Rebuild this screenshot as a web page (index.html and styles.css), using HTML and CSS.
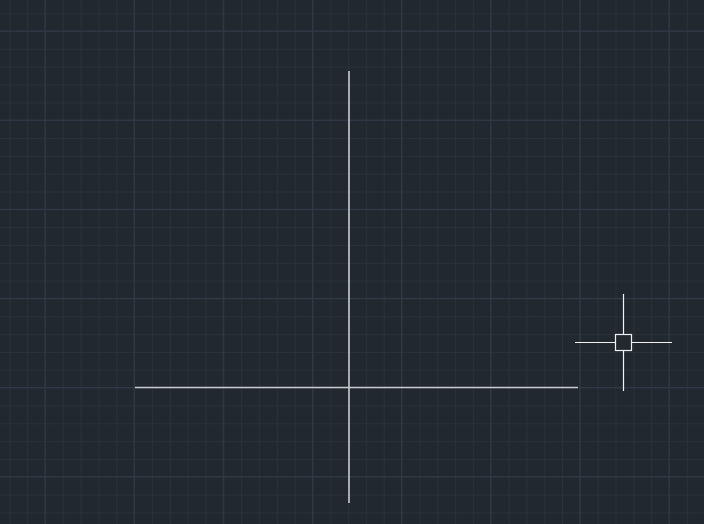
FILE: index.html
```html
<!DOCTYPE html>
<html>
<head>
<meta charset="utf-8">
<link rel="stylesheet" href="styles.css">
</head>
<body>
<div class="canvas">
<svg class="drawing" width="704" height="524" viewBox="0 0 704 524">
  <defs>
    <pattern id="minor" x="9.3" y="13.2" width="17.83" height="17.83" patternUnits="userSpaceOnUse">
      <path d="M0.5 0 V17.83 M0 0.5 H17.83" class="minor-line"/>
    </pattern>
    <pattern id="major" x="44.5" y="30.5" width="89.14" height="89.14" patternUnits="userSpaceOnUse">
      <path d="M0.5 0 V89.14 M0 0.5 H89.14" class="major-line"/>
    </pattern>
  </defs>
  <rect width="704" height="524" fill="url(#minor)"/>
  <rect width="704" height="524" fill="url(#major)"/>
  <line x1="349" y1="71" x2="349" y2="503" class="axis"/>
  <line x1="135" y1="387.5" x2="578" y2="387.5" class="axis"/>
  <g class="cursor">
    <line x1="623.5" y1="294" x2="623.5" y2="334"/>
    <line x1="623.5" y1="351" x2="623.5" y2="391"/>
    <line x1="575" y1="342.5" x2="615" y2="342.5"/>
    <line x1="632" y1="342.5" x2="672" y2="342.5"/>
    <rect x="615.5" y="334.5" width="16" height="16" fill="none"/>
  </g>
</svg>
</div>
</body>
</html>
```
FILE: styles.css
```css
html, body {
  margin: 0;
  padding: 0;
  background: #212830;
  overflow: hidden;
}
.canvas {
  width: 704px;
  height: 524px;
  background: #212830;
}
.drawing {
  display: block;
}
.minor-line {
  stroke: #283039;
  stroke-width: 1;
  fill: none;
}
.major-line {
  stroke: #323a48;
  stroke-width: 1;
  fill: none;
}
.axis {
  stroke: #c9ccd1;
  stroke-width: 1.6;
}
.cursor line, .cursor rect {
  stroke: #f2f2f2;
  stroke-width: 1.2;
}
```
